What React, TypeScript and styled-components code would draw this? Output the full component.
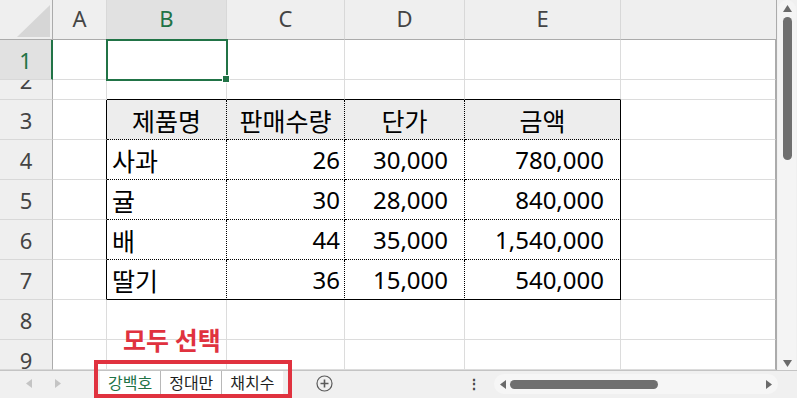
import React from 'react'
import styled, { createGlobalStyle, css } from 'styled-components'

const GlobalStyle = createGlobalStyle`
  html, body {
    margin: 0;
    padding: 0;
    background: #ffffff;
    overflow: hidden;
  }
`

const EXCEL_GREEN = '#217346'
const MARK_RED = '#e0323f'
const GRID = '#dcdcdc'
const HEAD_LINE = '#ababab'

type Line = 'grid' | 'dotted' | 'solid' | 'edge'

const lineCss = (l: Line) => {
  if (l === 'dotted') return '1px dotted #000000'
  if (l === 'solid') return '1px solid #000000'
  if (l === 'edge') return `1px solid ${HEAD_LINE}`
  return `1px solid ${GRID}`
}

const Window = styled.div`
  position: relative;
  width: 797px;
  height: 398px;
  display: grid;
  grid-template-rows: 370px 28px;
  font-family: "Noto Sans", "Noto Sans CJK KR", sans-serif;
  overflow: hidden;
`

const Workspace = styled.div`
  display: flex;
  min-height: 0;
`

const Sheet = styled.div`
  display: grid;
  grid-template-columns: 53px 54px 120px 118px 120px 156px 155px;
  grid-template-rows: 40px 40px 20px 40px 40px 40px 40px 40px 40px 30px;
  width: 776px;
  height: 370px;
  overflow: hidden;
  background: #ffffff;
`

const Corner = styled.div`
  background: #efefef;
  border-right: 1px solid ${HEAD_LINE};
  border-bottom: 1px solid ${HEAD_LINE};
  box-sizing: border-box;
  svg {
    display: block;
  }
`

const ColHeader = styled.div<{ $selected?: boolean; $last?: boolean }>`
  display: flex;
  align-items: center;
  justify-content: center;
  padding-bottom: 3px;
  box-sizing: border-box;
  background: ${({ $selected }) => ($selected ? '#e1e1e1' : '#efefef')};
  color: ${({ $selected }) => ($selected ? EXCEL_GREEN : '#444444')};
  border-bottom: 1px solid ${HEAD_LINE};
  border-right: ${({ $last }) => ($last ? 'none' : '1px solid #d8d8d8')};
  font-size: 22px;
`

const RowHeader = styled.div<{ $selected?: boolean }>`
  overflow: hidden;
  box-sizing: border-box;
  text-align: center;
  background: ${({ $selected }) => ($selected ? '#e1e1e1' : '#efefef')};
  color: ${({ $selected }) => ($selected ? EXCEL_GREEN : '#444444')};
  border-bottom: 1px solid #d8d8d8;
  border-right: ${({ $selected }) =>
    $selected ? `2px solid ${EXCEL_GREEN}` : `1px solid ${HEAD_LINE}`};
  font-size: 22px;
`

const RowLabel = styled.div<{ $shift?: number }>`
  height: 40px;
  line-height: 40px;
  margin-top: ${({ $shift }) => $shift ?? 0}px;
`

const Cell = styled.div<{
  $right: Line
  $bottom: Line
  $align?: 'left' | 'center' | 'right'
  $fill?: boolean
  $numeric?: boolean
  $pad?: number
}>`
  position: relative;
  display: flex;
  align-items: center;
  box-sizing: border-box;
  white-space: nowrap;
  color: #000000;
  background: ${({ $fill }) => ($fill ? '#ededed' : '#ffffff')};
  border-right: ${({ $right }) => lineCss($right)};
  border-bottom: ${({ $bottom }) => lineCss($bottom)};
  font-size: ${({ $numeric }) => ($numeric ? '24px' : '25px')};
  ${({ $align, $pad }) => {
    if ($align === 'right')
      return css`
        justify-content: flex-end;
        padding-right: ${$pad ?? 4}px;
      `
    if ($align === 'center')
      return css`
        justify-content: center;
      `
    return css`
      justify-content: flex-start;
      padding-left: 5px;
    `
  }}
`

const Selection = styled.div`
  position: absolute;
  z-index: 2;
  top: -1px;
  left: -1px;
  right: -2px;
  bottom: -2px;
  border: 2px solid ${EXCEL_GREEN};
  pointer-events: none;
`

const FillHandle = styled.div`
  position: absolute;
  right: -4px;
  bottom: -4px;
  width: 6px;
  height: 6px;
  background: ${EXCEL_GREEN};
  border: 1px solid #ffffff;
`

const VScroll = styled.div`
  width: 21px;
  height: 370px;
  background: #f0f0f0;
  border-left: 1px solid ${HEAD_LINE};
  box-sizing: border-box;
  display: flex;
  justify-content: center;
  padding: 0 1px;
`

const VTrack = styled.div`
  width: 18px;
  height: 100%;
  background: #f4f4f4;
  border-radius: 9px 9px 0 0;
  display: flex;
  flex-direction: column;
  align-items: center;
  padding-top: 5px;
  box-sizing: border-box;
`

const VThumb = styled.div`
  width: 9px;
  height: 143px;
  margin-top: 5px;
  border-radius: 5px;
  background: #6f6f6f;
`

const Spacer = styled.div`
  flex: 1;
`

const Arrow = styled.svg<{ $dark?: boolean }>`
  display: block;
  flex: none;
  fill: ${({ $dark }) => ($dark ? '#6a6a6a' : '#c4c4c4')};
`

const BottomBar = styled.div`
  display: flex;
  align-items: stretch;
  background: #f0f0f0;
  border-top: 1px solid #c4c4c4;
  box-sizing: border-box;
`

const NavArrows = styled.div`
  width: 100px;
  display: flex;
  align-items: center;
  gap: 23px;
  padding-left: 26px;
  padding-bottom: 3px;
  box-sizing: border-box;
`

const Tabs = styled.div`
  display: flex;
  height: 26px;
`

const Tab = styled.div<{ $active?: boolean; $divider?: boolean }>`
  display: flex;
  align-items: center;
  padding: 0 8px 4px;
  background: #ffffff;
  font-family: "Noto Sans CJK KR", sans-serif;
  font-size: 16px;
  color: ${({ $active }) => ($active ? EXCEL_GREEN : '#1f1f1f')};
  border-left: ${({ $divider }) => ($divider ? '1px solid #b8b8b8' : 'none')};
`

const AddSheet = styled.div`
  display: flex;
  align-items: center;
  margin-left: 33px;
  padding-bottom: 2px;
`

const Dots = styled.div`
  display: flex;
  align-items: center;
  padding-bottom: 3px;
  margin-right: 13px;
  color: #444444;
  font-size: 14px;
  font-weight: bold;
`

const HTrack = styled.div`
  width: 284px;
  margin: 3px 19px 4px 0;
  border-radius: 10px;
  background: #f6f6f6;
  display: flex;
  align-items: center;
  padding: 0 6px;
  box-sizing: border-box;
`

const HThumb = styled.div`
  width: 148px;
  height: 9px;
  margin-left: 4px;
  border-radius: 5px;
  background: #6f6f6f;
`

const Callout = styled.div`
  position: absolute;
  left: 123px;
  top: 324px;
  font-family: "Noto Sans CJK KR", sans-serif;
  font-weight: bold;
  font-size: 25px;
  line-height: 1.2;
  color: ${MARK_RED};
`

const MarkBox = styled.div`
  position: absolute;
  left: 94px;
  top: 360px;
  width: 198px;
  height: 38px;
  border: 4px solid ${MARK_RED};
  box-sizing: border-box;
  pointer-events: none;
`

const columns = ['A', 'B', 'C', 'D', 'E', '']
const rowNumbers = [1, 2, 3, 4, 5, 6, 7, 8, 9]

type CellData = { text: string; align: 'left' | 'center' | 'right'; numeric?: boolean }

const table: CellData[][] = [
  [
    { text: '제품명', align: 'center' },
    { text: '판매수량', align: 'center' },
    { text: '단가', align: 'center' },
    { text: '금액', align: 'center' },
  ],
  ...[
    ['사과', '26', '30,000', '780,000'],
    ['귤', '30', '28,000', '840,000'],
    ['배', '44', '35,000', '1,540,000'],
    ['딸기', '36', '15,000', '540,000'],
  ].map((r) =>
    r.map((text, i) =>
      i === 0
        ? ({ text, align: 'left' } as CellData)
        : ({ text, align: 'right', numeric: true } as CellData)
    )
  ),
]

// padding on the right of the number columns (C is tighter than D/E)
const rightPad = [0, 4, 16, 16]

const rowLabelShift: Record<number, number> = { 2: -20 }

const App: React.FC = () => {
  const renderCell = (row: number, col: number) => {
    const inTable = col >= 1 && col <= 4 && row >= 3 && row <= 7
    let right: Line = 'grid'
    let bottom: Line = 'grid'
    if (col === 0 && row >= 3 && row <= 7) right = 'solid'
    if (inTable) right = col === 4 ? 'solid' : 'dotted'
    if (col === 5) right = 'edge'
    if (row === 2 && col >= 1 && col <= 4) bottom = 'solid'
    if (inTable) bottom = row === 7 ? 'solid' : 'dotted'

    const data = inTable ? table[row - 3][col - 1] : undefined
    return (
      <Cell
        key={`${row}-${col}`}
        $right={right}
        $bottom={bottom}
        $align={data?.align}
        $numeric={data?.numeric}
        $pad={rightPad[col - 1]}
        $fill={inTable && row === 3}
      >
        {data?.text}
        {row === 1 && col === 1 && (
          <Selection>
            <FillHandle />
          </Selection>
        )}
      </Cell>
    )
  }

  return (
    <>
      <GlobalStyle />
      <Window>
        <Workspace>
          <Sheet>
            <Corner>
              <svg width="52" height="39" viewBox="0 0 52 39">
                <polygon points="50,5 50,37 17,37" fill="#d6d6d6" />
              </svg>
            </Corner>
            {columns.map((c, i) => (
              <ColHeader key={c || 'F'} $selected={c === 'B'} $last={i === columns.length - 1}>
                {c}
              </ColHeader>
            ))}
            {rowNumbers.map((r) => (
              <React.Fragment key={r}>
                <RowHeader $selected={r === 1}>
                  <RowLabel $shift={rowLabelShift[r]}>{r}</RowLabel>
                </RowHeader>
                {columns.map((_, ci) => renderCell(r, ci))}
              </React.Fragment>
            ))}
          </Sheet>
          <VScroll>
            <VTrack>
              <Arrow $dark width="9" height="7" viewBox="0 0 9 7">
                <polygon points="4.5,0 9,7 0,7" />
              </Arrow>
              <VThumb />
              <Spacer />
              <Arrow $dark width="9" height="7" viewBox="0 0 9 7" style={{ marginBottom: 3 }}>
                <polygon points="0,0 9,0 4.5,7" />
              </Arrow>
            </VTrack>
          </VScroll>
        </Workspace>

        <BottomBar>
          <NavArrows>
            <Arrow width="6" height="9" viewBox="0 0 6 9">
              <polygon points="6,0 6,9 0,4.5" />
            </Arrow>
            <Arrow width="6" height="9" viewBox="0 0 6 9">
              <polygon points="0,0 6,4.5 0,9" />
            </Arrow>
          </NavArrows>
          <Tabs>
            <Tab $active>강백호</Tab>
            <Tab $divider>정대만</Tab>
            <Tab $divider>채치수</Tab>
          </Tabs>
          <AddSheet>
            <svg width="17" height="17" viewBox="0 0 17 17">
              <circle cx="8.5" cy="8.5" r="7.5" fill="none" stroke="#5a5a5a" strokeWidth="1.2" />
              <path d="M8.5 4.5v8M4.5 8.5h8" stroke="#5a5a5a" strokeWidth="1.6" />
            </svg>
          </AddSheet>
          <Spacer />
          <Dots>⋮</Dots>
          <HTrack>
            <Arrow $dark width="6" height="9" viewBox="0 0 6 9">
              <polygon points="6,0 6,9 0,4.5" />
            </Arrow>
            <HThumb />
            <Spacer />
            <Arrow $dark width="6" height="9" viewBox="0 0 6 9">
              <polygon points="0,0 6,4.5 0,9" />
            </Arrow>
          </HTrack>
        </BottomBar>

        <Callout>모두 선택</Callout>
        <MarkBox />
      </Window>
    </>
  )
}

export default App
